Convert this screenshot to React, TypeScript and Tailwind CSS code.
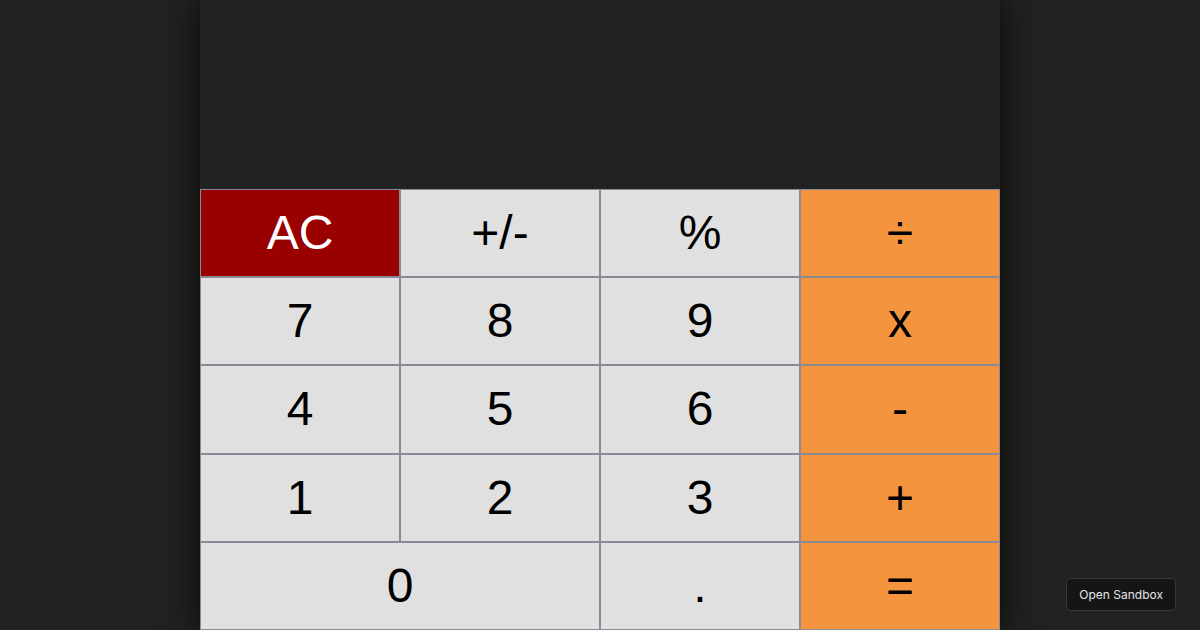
const rows: { label: string; kind: "ac" | "num" | "op"; wide?: boolean }[][] = [
  [
    { label: "AC", kind: "ac" },
    { label: "+/-", kind: "num" },
    { label: "%", kind: "num" },
    { label: "÷", kind: "op" },
  ],
  [
    { label: "7", kind: "num" },
    { label: "8", kind: "num" },
    { label: "9", kind: "num" },
    { label: "x", kind: "op" },
  ],
  [
    { label: "4", kind: "num" },
    { label: "5", kind: "num" },
    { label: "6", kind: "num" },
    { label: "-", kind: "op" },
  ],
  [
    { label: "1", kind: "num" },
    { label: "2", kind: "num" },
    { label: "3", kind: "num" },
    { label: "+", kind: "op" },
  ],
  [
    { label: "0", kind: "num", wide: true },
    { label: ".", kind: "num" },
    { label: "=", kind: "op" },
  ],
];

const kindClass = {
  ac: "bg-[#990000] text-white",
  num: "bg-[#e0e0e0] text-black",
  op: "bg-[#f4943f] text-black",
};

export default function App() {
  return (
    <div className="relative flex h-[630px] w-[1200px] justify-center overflow-hidden bg-[#222222] font-['Liberation_Sans',Arial,sans-serif]">
      <div className="flex h-full w-[800px] flex-col bg-[#222222] shadow-[0_0_30px_6px_rgba(0,0,0,0.55)]">
        <div className="h-[189px] shrink-0" />
        <div className="grid flex-1 grid-cols-4 grid-rows-5">
          {rows.flat().map((b, i) => (
            <button
              key={i}
              className={`flex items-center justify-center border border-[#8a8a96] text-[48px] leading-none ${kindClass[b.kind]} ${b.wide ? "col-span-2" : ""}`}
            >
              {b.label}
            </button>
          ))}
        </div>
      </div>
      <button className="absolute bottom-[19px] right-[24px] flex h-[33px] items-center rounded-[5px] border border-[#3a3a3a] bg-[#151515] px-3 text-[12px] leading-[16px] text-[#e6e6e6] font-['Inter','Liberation_Sans',sans-serif]">
        Open Sandbox
      </button>
    </div>
  );
}
